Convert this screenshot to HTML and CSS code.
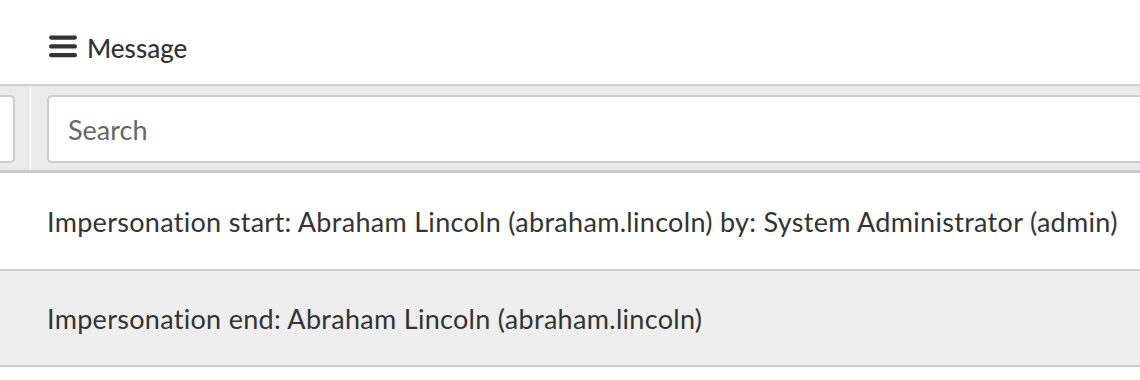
FILE: index.html
```html
<!DOCTYPE html>
<html>
<head>
<meta charset="utf-8">
<link rel="stylesheet" href="styles.css">
</head>
<body>
<div class="table">
  <div class="header">
    <div class="th">
      <svg class="bars" width="28" height="23" viewBox="0 0 28 23">
        <rect x="0" y="0.5" width="28" height="4.2" rx="2.1"/>
        <rect x="0" y="9.3" width="28" height="4.2" rx="2.1"/>
        <rect x="0" y="18.1" width="28" height="4.2" rx="2.1"/>
      </svg>
      <span class="th-label">Message</span>
    </div>
  </div>
  <div class="filters">
    <div class="filter-cell filter-left">
      <div class="input input-cut"></div>
    </div>
    <div class="filter-cell filter-main">
      <div class="input"><span class="placeholder">Search</span></div>
    </div>
  </div>
  <div class="row">
    <div class="cell">Impersonation start: Abraham Lincoln (abraham.lincoln) by: System Administrator (admin)</div>
  </div>
  <div class="row row-alt">
    <div class="cell">Impersonation end: Abraham Lincoln (abraham.lincoln)</div>
  </div>
</div>
</body>
</html>
```
FILE: styles.css
```css
html, body {
  margin: 0;
  padding: 0;
  background: #fff;
}
body {
  font-family: "Lato", "Liberation Sans", sans-serif;
  color: #333;
  width: 1140px;
  overflow: hidden;
}
.table {
  width: 1140px;
}
.header {
  height: 84px;
  display: flex;
  align-items: flex-end;
}
.th {
  display: flex;
  align-items: center;
  gap: 10px;
  padding: 0 0 21px 49px;
}
.bars {
  display: block;
  fill: #333;
}
.th-label {
  font-size: 26px;
  font-weight: 500;
  line-height: 30px;
  color: #333;
  margin-top: 4px;
}
.filters {
  display: flex;
  background: #e9eaeb;
  border-top: 2px solid #cfcfcf;
  border-bottom: 3px solid #c9c9c9;
  padding: 9px 0 7px;
}
.filter-cell {
  display: flex;
}
.filter-left {
  width: 15px;
  padding-right: 15px;
  border-right: 1px solid #fff;
  margin: -9px 0 -7px;
  padding-top: 9px;
  padding-bottom: 7px;
}
.filter-main {
  flex: 1;
  padding-left: 16px;
}
.input {
  flex: 1;
  height: 64px;
  background: #fff;
  border: 2px solid #cccccc;
  border-right: none;
  border-radius: 5px 0 0 5px;
  display: flex;
  align-items: center;
  padding-left: 19px;
}
.input-cut {
  border-left: none;
  border-right: 2px solid #cccccc;
  border-radius: 0 5px 5px 0;
  padding-left: 0;
}
.placeholder {
  font-size: 27px;
  color: #666;
}
.row {
  height: 96px;
  border-bottom: 2px solid #cccccc;
  display: flex;
  align-items: center;
  padding-left: 47px;
}
.row-alt {
  background: #eeeeee;
  height: 94px;
}
.cell {
  font-size: 27px;
  letter-spacing: 0.3px;
  white-space: nowrap;
}
```
